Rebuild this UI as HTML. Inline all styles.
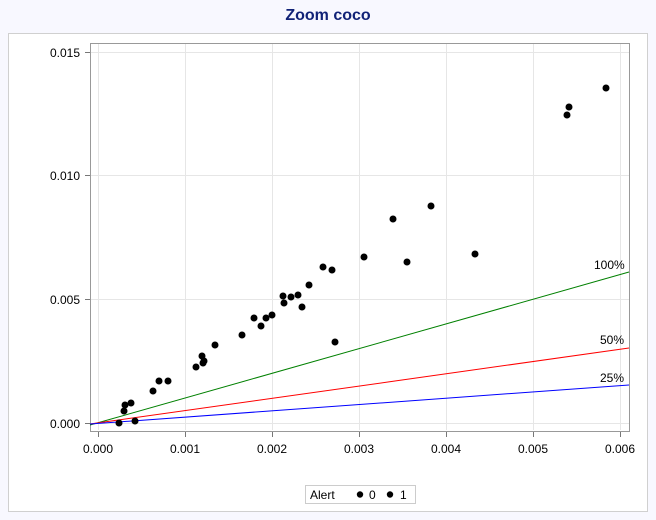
<!DOCTYPE html>
<html><head><style>
html,body{margin:0;padding:0;background:#f8f8ff;overflow:hidden;font-family:"Liberation Sans",Arial,sans-serif;}
svg{display:block;}
</style></head><body>
<svg width="656" height="520" xmlns="http://www.w3.org/2000/svg" font-family="Liberation Sans, Arial, sans-serif">
<rect width="656" height="520" fill="#f8f8ff"/>
<text x="328" y="20" text-anchor="middle" font-size="16" font-weight="bold" fill="#112277">Zoom coco</text>
<rect x="8.5" y="33.5" width="639" height="478" fill="#fff" stroke="#d0d0d0"/>
<g stroke="#e6e6e6" stroke-width="1">
<line x1="98.5" y1="44" x2="98.5" y2="430"/><line x1="185.5" y1="44" x2="185.5" y2="430"/>
<line x1="272.5" y1="44" x2="272.5" y2="430"/><line x1="359.5" y1="44" x2="359.5" y2="430"/>
<line x1="446.5" y1="44" x2="446.5" y2="430"/><line x1="533.5" y1="44" x2="533.5" y2="430"/>
<line x1="620.5" y1="44" x2="620.5" y2="430"/>
<line x1="91" y1="52.5" x2="629" y2="52.5"/><line x1="91" y1="175.5" x2="629" y2="175.5"/>
<line x1="91" y1="299.5" x2="629" y2="299.5"/><line x1="91" y1="423.5" x2="629" y2="423.5"/>
</g>
<rect x="90.5" y="43.5" width="539" height="388" fill="none" stroke="#999"/>
<g stroke="#777">
<line x1="85" y1="52.5" x2="90" y2="52.5"/><line x1="85" y1="175.5" x2="90" y2="175.5"/>
<line x1="85" y1="299.5" x2="90" y2="299.5"/><line x1="85" y1="423.5" x2="90" y2="423.5"/>
<line x1="98.5" y1="432" x2="98.5" y2="437"/><line x1="185.5" y1="432" x2="185.5" y2="437"/>
<line x1="272.5" y1="432" x2="272.5" y2="437"/><line x1="359.5" y1="432" x2="359.5" y2="437"/>
<line x1="446.5" y1="432" x2="446.5" y2="437"/><line x1="533.5" y1="432" x2="533.5" y2="437"/>
<line x1="620.5" y1="432" x2="620.5" y2="437"/>
</g>
<g font-size="12" fill="#000" text-anchor="end">
<text x="80" y="57">0.015</text><text x="80" y="180">0.010</text><text x="80" y="304">0.005</text><text x="80" y="428">0.000</text>
</g>
<g font-size="12" fill="#000" text-anchor="middle">
<text x="98" y="453">0.000</text><text x="185" y="453">0.001</text><text x="272" y="453">0.002</text><text x="359" y="453">0.003</text><text x="446" y="453">0.004</text><text x="533" y="453">0.005</text><text x="620" y="453">0.006</text>
</g>
<line x1="90" y1="425" x2="629" y2="272" stroke="green"/>
<line x1="90" y1="424" x2="629" y2="348" stroke="red"/>
<line x1="90" y1="424" x2="629" y2="385" stroke="blue"/>
<g font-size="12" fill="#000">
<text x="594" y="269">100%</text><text x="600" y="344">50%</text><text x="600" y="382">25%</text>
</g>
<g fill="#000">
<circle cx="119" cy="423" r="3.5"/><circle cx="125" cy="405" r="3.5"/><circle cx="124" cy="411" r="3.5"/><circle cx="131" cy="403" r="3.5"/><circle cx="135" cy="421" r="3.5"/><circle cx="153" cy="391" r="3.5"/><circle cx="159" cy="381" r="3.5"/><circle cx="168" cy="381" r="3.5"/><circle cx="196" cy="367" r="3.5"/><circle cx="202" cy="356" r="3.5"/><circle cx="203" cy="363" r="3.5"/><circle cx="204" cy="361" r="3.5"/><circle cx="215" cy="345" r="3.5"/><circle cx="242" cy="335" r="3.5"/><circle cx="254" cy="318" r="3.5"/><circle cx="261" cy="326" r="3.5"/><circle cx="266" cy="318" r="3.5"/><circle cx="272" cy="315" r="3.5"/><circle cx="283" cy="296" r="3.5"/><circle cx="284" cy="303" r="3.5"/><circle cx="291" cy="297" r="3.5"/><circle cx="298" cy="295" r="3.5"/><circle cx="302" cy="307" r="3.5"/><circle cx="309" cy="285" r="3.5"/><circle cx="323" cy="267" r="3.5"/><circle cx="332" cy="270" r="3.5"/><circle cx="335" cy="342" r="3.5"/><circle cx="364" cy="257" r="3.5"/><circle cx="393" cy="219" r="3.5"/><circle cx="407" cy="262" r="3.5"/><circle cx="431" cy="206" r="3.5"/><circle cx="475" cy="254" r="3.5"/><circle cx="567" cy="115" r="3.5"/><circle cx="569" cy="107" r="3.5"/><circle cx="606" cy="88" r="3.5"/>
</g>
<rect x="305.5" y="485.5" width="110" height="18" fill="#fff" stroke="#ccc"/>
<text x="310" y="499" font-size="12">Alert</text>
<circle cx="360" cy="494.5" r="3.2"/><text x="369" y="499" font-size="12">0</text>
<circle cx="390" cy="494.5" r="3.2"/><text x="400" y="499" font-size="12">1</text>
</svg>
</body></html>
